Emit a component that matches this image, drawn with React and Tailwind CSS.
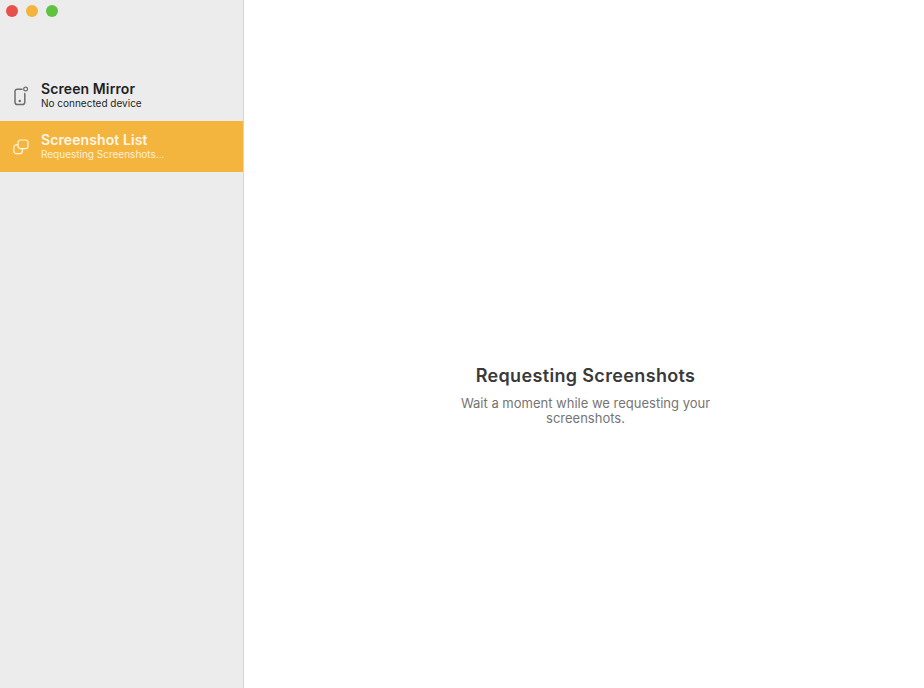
import React from 'react';

function PhoneIcon() {
  return (
    <svg width="16" height="20" viewBox="0 0 16 20" fill="none" stroke="#6e6e6e" strokeWidth="1.5" className="shrink-0">
      <path d="M9 3.2H4.2A2.2 2.2 0 0 0 2 5.4v10.9a2.2 2.2 0 0 0 2.2 2.2h5.4a2.2 2.2 0 0 0 2.2-2.2V7.6" strokeLinecap="round" />
      <circle cx="12.6" cy="3" r="1.9" strokeWidth="1.2" />
      <circle cx="6.8" cy="15" r="1.2" fill="#6e6e6e" stroke="none" />
    </svg>
  );
}

function CopyIcon() {
  return (
    <svg width="16" height="16" viewBox="0 0 16 16" fill="none" stroke="#ffffff" strokeOpacity="0.85" strokeWidth="1.2" className="shrink-0">
      <rect x="5" y="1" width="10" height="8.6" rx="2.6" />
      <path d="M5 5.8H3.4A2.6 2.6 0 0 0 .8 8.4v3.6a2.6 2.6 0 0 0 2.6 2.6h3.4A2.6 2.6 0 0 0 9.4 12V9.6" />
    </svg>
  );
}

function SidebarItem({ icon, title, subtitle, active }) {
  return (
    <div className={`flex h-[51px] items-center gap-[12px] pl-[13px] ${active ? 'bg-[#f4b53f] text-white' : 'text-[#1f1f1f]'}`}>
      {icon}
      <div className="flex flex-col pb-[3px]">
        <span className={`text-[14px] font-semibold leading-[17px] tracking-[0.1px] ${active ? 'text-[#fdf6e8]' : ''}`}>{title}</span>
        <span className={`text-[10px] leading-[12px] ${active ? 'text-[#fdf0d6]' : ''}`}>{subtitle}</span>
      </div>
    </div>
  );
}

export default function App() {
  return (
    <div className="flex h-[688px] w-[924px] overflow-hidden bg-white font-['Inter',sans-serif]">
      <aside className="w-[244px] shrink-0 border-r border-[#d4d4d4] bg-[#ececec]">
        <div className="flex h-[70px] items-start gap-2 pl-[6px] pt-[5px]">
          <span className="h-3 w-3 rounded-full bg-[#e8504c]" />
          <span className="h-3 w-3 rounded-full bg-[#f3b33c]" />
          <span className="h-3 w-3 rounded-full bg-[#5fc341]" />
        </div>
        <SidebarItem icon={<PhoneIcon />} title="Screen Mirror" subtitle="No connected device" />
        <SidebarItem icon={<CopyIcon />} title="Screenshot List" subtitle="Requesting Screenshots..." active />
      </aside>
      <main className="flex flex-1 flex-col items-center pl-[3px] pt-[364px]">
        <h1 className="text-[18px] font-semibold leading-[24px] tracking-[0.35px] text-[#3a3a3a]">Requesting Screenshots</h1>
        <p className="mt-[8px] w-[260px] text-center text-[13px] leading-[15px] text-[#757575]">
          Wait a moment while we requesting your screenshots.
        </p>
      </main>
    </div>
  );
}
